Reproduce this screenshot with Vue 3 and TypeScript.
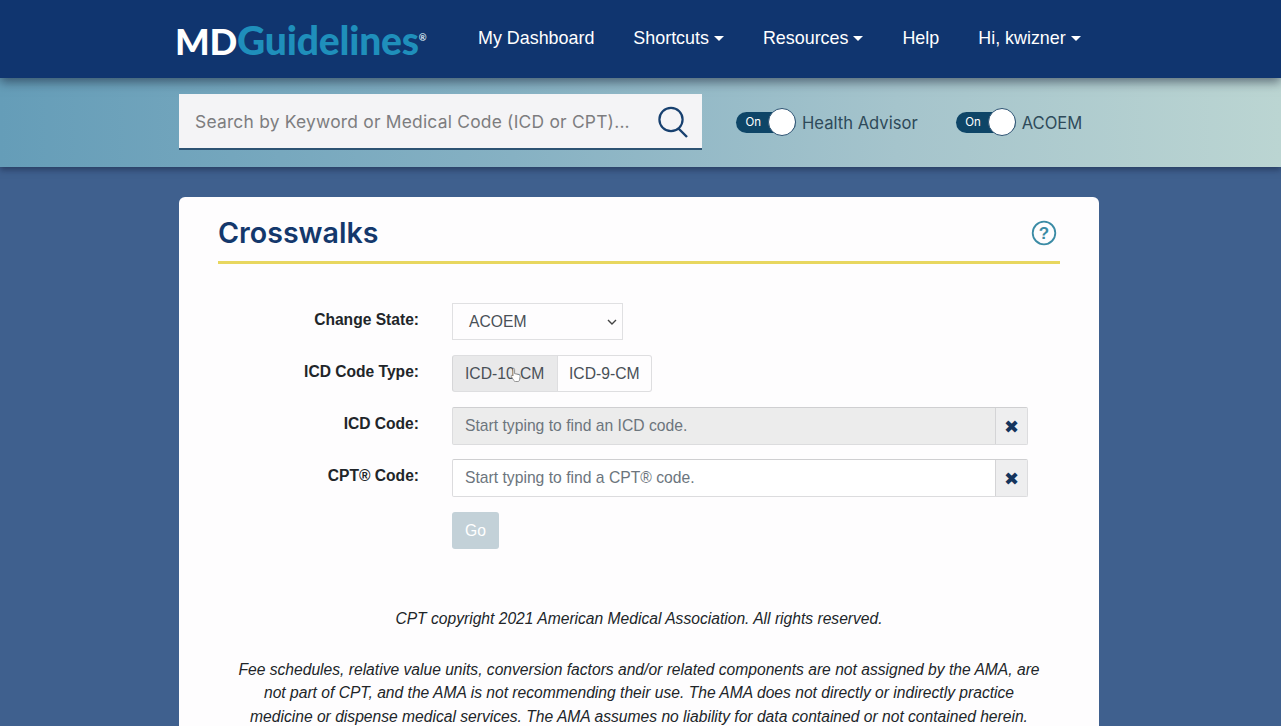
<template>
  <div class="page">
    <header class="topbar">
      <div class="logo">
        <span class="logo-md">MD</span><span class="logo-rest">Guidelines</span><span class="logo-reg">®</span>
      </div>
      <nav class="nav">
        <a v-for="item in navItems" :key="item.label" class="nav-link">
          {{ item.label }}<i v-if="item.caret" class="caret"></i>
        </a>
      </nav>
    </header>

    <div class="searchbar">
      <div class="search-box">
        <span class="search-text">Search by Keyword or Medical Code (ICD or CPT)...</span>
        <svg class="search-icon" width="32" height="32" viewBox="0 0 32 32" fill="none">
          <circle cx="14" cy="13.5" r="11.6" stroke="#17406f" stroke-width="2.2" />
          <path d="M21.5 22.5L30 31" stroke="#17406f" stroke-width="2.4" />
        </svg>
      </div>
      <div v-for="t in toggles" :key="t" class="toggle">
        <span class="switch">
          <span class="switch-on">On</span>
          <span class="knob"></span>
        </span>
        <span class="toggle-label">{{ t }}</span>
      </div>
    </div>

    <main class="card">
      <div class="card-head">
        <h1>Crosswalks</h1>
        <svg width="26" height="26" viewBox="0 0 26 26" fill="none">
          <circle cx="13" cy="13" r="11.3" stroke="#3b8ba5" stroke-width="1.8" />
          <text x="13" y="18.5" text-anchor="middle" class="help-mark">?</text>
        </svg>
      </div>

      <form class="form" @submit.prevent>
        <label class="lbl">Change State:</label>
        <div class="select">
          <span>ACOEM</span>
          <svg width="10" height="6" viewBox="0 0 10 6" fill="none">
            <path d="M1 1l4 4 4-4" stroke="#444" stroke-width="1.4" />
          </svg>
        </div>

        <label class="lbl">ICD Code Type:</label>
        <div class="btn-group">
          <span class="seg seg-active">ICD-10-CM</span>
          <span class="seg">ICD-9-CM</span>
          <svg class="cursor" width="12" height="16" viewBox="0 0 12 16">
            <path
              d="M3 1.500c.8-.6 1.600 0 1.600.9v4.200l4 .9c1 .3 1.600 1 1.500 2l-.5 3.400c-.2.9-.8 1.600-1.700 1.600H5.500c-.7 0-1.200-.3-1.600-.9L1.300 9.500c-.4-.7.4-1.500 1.100-1L3 9z"
              fill="#fff"
              stroke="#777"
              stroke-width=".8"
            />
          </svg>
        </div>

        <label class="lbl">ICD Code:</label>
        <div class="input-group input-disabled">
          <span class="ph">Start typing to find an ICD code.</span>
          <span class="clear">✖</span>
        </div>

        <label class="lbl">CPT® Code:</label>
        <div class="input-group">
          <span class="ph">Start typing to find a CPT® code.</span>
          <span class="clear">✖</span>
        </div>

        <span></span>
        <div><button class="go" disabled>Go</button></div>
      </form>

      <p class="legal first">CPT copyright 2021 American Medical Association. All rights reserved.</p>
      <p class="legal">
        Fee schedules, relative value units, conversion factors and/or related components are not assigned by the AMA, are<br />
        not part of CPT, and the AMA is not recommending their use. The AMA does not directly or indirectly practice<br />
        medicine or dispense medical services. The AMA assumes no liability for data contained or not contained herein.
      </p>
    </main>
  </div>
</template>

<script setup lang="ts">
const navItems = [
  { label: 'My Dashboard', caret: false },
  { label: 'Shortcuts', caret: true },
  { label: 'Resources', caret: true },
  { label: 'Help', caret: false },
  { label: 'Hi, kwizner', caret: true },
];

const toggles = ['Health Advisor', 'ACOEM'];
</script>

<style>
html,
body {
  margin: 0;
  overflow: hidden;
}
</style>

<style scoped>
.page {
  height: 726px;
  overflow: hidden;
  background: #3f608e;
  font-family: 'Liberation Sans', Arial, sans-serif;
}

.topbar {
  position: relative;
  z-index: 2;
  display: flex;
  align-items: center;
  height: 78px;
  padding-left: 175px;
  background: #10356f;
  box-shadow: 0 4px 10px rgba(20, 30, 50, 0.55);
}

.logo {
  display: flex;
  align-items: baseline;
  width: 303px;
  font-family: Lato, sans-serif;
  font-weight: 900;
  font-size: 36.5px;
  line-height: 1;
  margin-top: 2px;
  letter-spacing: -0.2px;
}

.logo-md {
  color: #fff;
}

.logo-rest {
  color: #1f8fbb;
  font-size: 39px;
}

.logo-reg {
  color: #d7e6ee;
  font-size: 9.500px;
  font-weight: 700;
  position: relative;
  top: -14px;
  margin-left: 0;
}

.nav {
  display: flex;
  gap: 39px;
  margin-top: -2px;
}

.nav-link {
  color: #fff;
  font-size: 17.9px;
  display: flex;
  align-items: center;
}

.caret {
  margin-left: 5px;
  border-top: 5px solid #fff;
  border-left: 5.5px solid transparent;
  border-right: 5.5px solid transparent;
}

.searchbar {
  position: relative;
  z-index: 1;
  display: flex;
  align-items: center;
  height: 89px;
  padding-left: 179px;
  background: linear-gradient(90deg, #659db8 0%, #86b1c3 40%, #a5c4cc 70%, #bbd5d2 100%);
  box-shadow: 0 3px 6px rgba(20, 30, 60, 0.5);
}

.search-box {
  display: flex;
  align-items: center;
  justify-content: space-between;
  box-sizing: border-box;
  width: 523px;
  height: 56px;
  margin: 0 34px 1px 0;
  padding: 0 13px 0 16px;
  background: #f4f4f6;
  border-bottom: 2px solid #2d5373;
}

.search-text {
  color: #7d7d7f;
  font-family: Inter, sans-serif;
  font-size: 17.4px;
  letter-spacing: 0.22px;
  white-space: nowrap;
}

.search-icon {
  flex: none;
  margin-top: 2px;
}

.toggle {
  display: flex;
  align-items: center;
  margin-right: 38px;
}

.switch {
  position: relative;
  display: block;
  width: 60px;
  height: 21px;
  border-radius: 11px;
  background: #0e4567;
}

.switch-on {
  position: absolute;
  left: 9.500px;
  top: 3px;
  color: #fff;
  font-family: Inter, sans-serif;
  font-size: 11.5px;
  line-height: 15px;
}

.knob {
  position: absolute;
  right: 0;
  top: -4px;
  box-sizing: border-box;
  width: 28px;
  height: 28px;
  border-radius: 50%;
  background: #fff;
  border: 1px solid #2d5373;
}

.toggle-label {
  margin-left: 6px;
  color: #2e4a5a;
  font-family: Inter, sans-serif;
  font-size: 16.6px;
  white-space: nowrap;
}

.card {
  box-sizing: border-box;
  width: 920px;
  height: 600px;
  margin: 30px 0 0 179px;
  padding: 0 39px;
  background: #fefdfe;
  border-radius: 6px 6px 0 0;
}

.card-head {
  display: flex;
  align-items: center;
  justify-content: space-between;
  box-sizing: border-box;
  height: 67px;
  padding: 8px 3px 0 0;
  border-bottom: 3px solid #e8d75f;
}

h1 {
  margin: -2px 0 0;
  color: #14386c;
  font-family: Inter, sans-serif;
  font-size: 28.6px;
  font-weight: 600;
}

.help-mark {
  fill: #3b8ba5;
  font-family: 'Liberation Sans', sans-serif;
  font-size: 17px;
  font-weight: 700;
}

.form {
  display: grid;
  grid-template-columns: 201px 1fr;
  column-gap: 33px;
  row-gap: 15px;
  margin-top: 39px;
  padding-right: 32px;
}

.lbl {
  height: 37px;
  padding-top: 7px;
  box-sizing: border-box;
  color: #212529;
  font-size: 15.6px;
  font-weight: 700;
  line-height: 20px;
  text-align: right;
}

.select {
  display: flex;
  align-items: center;
  justify-content: space-between;
  box-sizing: border-box;
  width: 171px;
  height: 37px;
  padding: 0 5px 0 16px;
  border: 1px solid #e0e0e2;
  color: #495057;
  font-size: 15.7px;
}

.btn-group {
  position: relative;
  display: flex;
  height: 37px;
  width: 200px;
}

.seg {
  display: flex;
  align-items: center;
  box-sizing: border-box;
  padding: 0 11px;
  border: 1px solid #dedee0;
  border-left: 0;
  border-radius: 0 3px 3px 0;
  color: #495057;
  font-size: 15.7px;
  white-space: nowrap;
}

.seg-active {
  width: 106px;
  padding: 0 12px;
  border-left: 1px solid #d6d6d8;
  border-radius: 3px 0 0 3px;
  background: #e9e9ea;
}

.cursor {
  position: absolute;
  left: 58px;
  top: 12px;
}

.input-group {
  display: flex;
  box-sizing: border-box;
  height: 38px;
  margin-bottom: -1px;
  border: 1px solid #dcdcde;
  border-top-color: #cfcfd1;
  border-radius: 2px;
  background: #fff;
}

.input-disabled {
  background: #ececec;
}

.ph {
  flex: 1;
  padding-left: 12px;
  color: #6c757d;
  font-size: 15.7px;
  line-height: 35px;
}

.clear {
  display: flex;
  align-items: center;
  justify-content: center;
  width: 31px;
  border-left: 1px solid #d4d4d6;
  background: #eeeeef;
  color: #14345c;
  font-family: 'DejaVu Sans', sans-serif;
  font-size: 18px;
}

.go {
  display: block;
  width: 47px;
  height: 37px;
  margin-top: 1px;
  padding: 0;
  border: 0;
  border-radius: 3px;
  background: #c3d1d8;
  color: #fff;
  font-family: inherit;
  font-size: 15.7px;
}

.legal {
  margin: 0;
  color: #212529;
  font-size: 15.64px;
  font-style: italic;
  line-height: 23.5px;
  text-align: center;
}

.first {
  margin-top: 58px;
  margin-bottom: 27px;
}
</style>
